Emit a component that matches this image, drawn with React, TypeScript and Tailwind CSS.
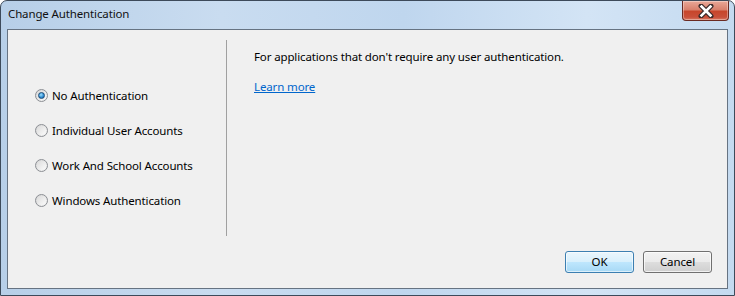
import React from "react";

function Radio({ checked }: { checked?: boolean }) {
  return (
    <span className="relative inline-flex h-[13px] w-[13px] shrink-0 items-center justify-center rounded-full border border-[#8c8f94] bg-[linear-gradient(135deg,#d6d6d6,#f6f6f6)]">
      <span className="absolute inset-[1px] rounded-full bg-[linear-gradient(135deg,#dcdcdc,#fbfbfb)]" />
      {checked && (
        <span className="relative h-[7px] w-[7px] rounded-full border border-[#1b4c78] bg-[radial-gradient(circle_at_40%_35%,#9fe1ff,#2d8ad0_60%,#1a5f9c)]" />
      )}
    </span>
  );
}

function CloseButton() {
  return (
    <div className="absolute right-[5px] top-0 flex h-[20px] w-[47px] items-center justify-center rounded-b-[4px] border border-t-0 border-[#6a2a22] bg-[linear-gradient(#e9a898_0%,#d9816d_45%,#c7462c_55%,#c9503a_85%,#d87a64_100%)] shadow-[inset_0_0_0_1px_rgba(255,255,255,0.35)]">
      <svg width="16" height="14" viewBox="0 0 16 14">
        <path d="M3 2 L13 12 M13 2 L3 12" stroke="#3a2a2a" strokeWidth="5" strokeLinecap="round" />
        <path d="M3.5 2.5 L12.5 11.5 M12.5 2.5 L3.5 11.5" stroke="#ffffff" strokeWidth="2.6" strokeLinecap="square" />
      </svg>
    </div>
  );
}

export default function App() {
  const options = [
    { label: "No Authentication", checked: true },
    { label: "Individual User Accounts" },
    { label: "Work And School Accounts" },
    { label: "Windows Authentication" },
  ];
  return (
    <div
      className="relative h-[296px] w-[735px] overflow-hidden rounded-t-[7px] border border-[#3d4a5a] bg-[linear-gradient(90deg,#b7cfe8,#c9dcf0_30%,#bfd6ee_55%,#d3e4f5_80%,#c4daf0)] text-[11.5px] tracking-[-0.13px] text-[#000]"
      style={{ fontFamily: '"Noto Sans", "Open Sans", sans-serif' }}
    >
      <div className="flex h-[28px] items-center pl-[7px] pb-[2px] text-[#111]">
        Change Authentication
      </div>
      <CloseButton />
      <div className="mx-[6px] flex h-[260px] flex-col border border-[#667382] bg-[#f0f0f0]">
        <div className="flex flex-1">
          <div className="flex w-[218px] flex-col pl-[27px] pt-[48px]">
            {options.map((o) => (
              <div key={o.label} className="flex h-[35px] items-center gap-[4px]">
                <Radio checked={o.checked} />
                <span>{o.label}</span>
              </div>
            ))}
          </div>
          <div className="mt-[10px] h-[196px] w-px bg-[#a0a0a0]" />
          <div className="flex flex-col pl-[27px] pt-[19px]">
            <div className="leading-[16px]">For applications that don't require any user authentication.</div>
            <a className="mt-[14px] leading-[16px] text-[#0066cc] underline">Learn more</a>
          </div>
        </div>
        <div className="flex justify-end gap-[9px] pb-[15px] pr-[15px]">
          <button className="h-[22px] w-[69px] rounded-[3px] border border-[#3c7fb1] bg-[linear-gradient(#eaf6fd_0%,#d9f0fc_48%,#bee6fd_52%,#a7d9f5_100%)] shadow-[inset_0_0_0_1px_rgba(255,255,255,0.6)]">
            OK
          </button>
          <button className="h-[22px] w-[69px] rounded-[3px] border border-[#707070] bg-[linear-gradient(#f2f2f2_0%,#ebebeb_48%,#dddddd_52%,#cfcfcf_100%)] shadow-[inset_0_0_0_1px_rgba(255,255,255,0.7)]">
            Cancel
          </button>
        </div>
      </div>
    </div>
  );
}
